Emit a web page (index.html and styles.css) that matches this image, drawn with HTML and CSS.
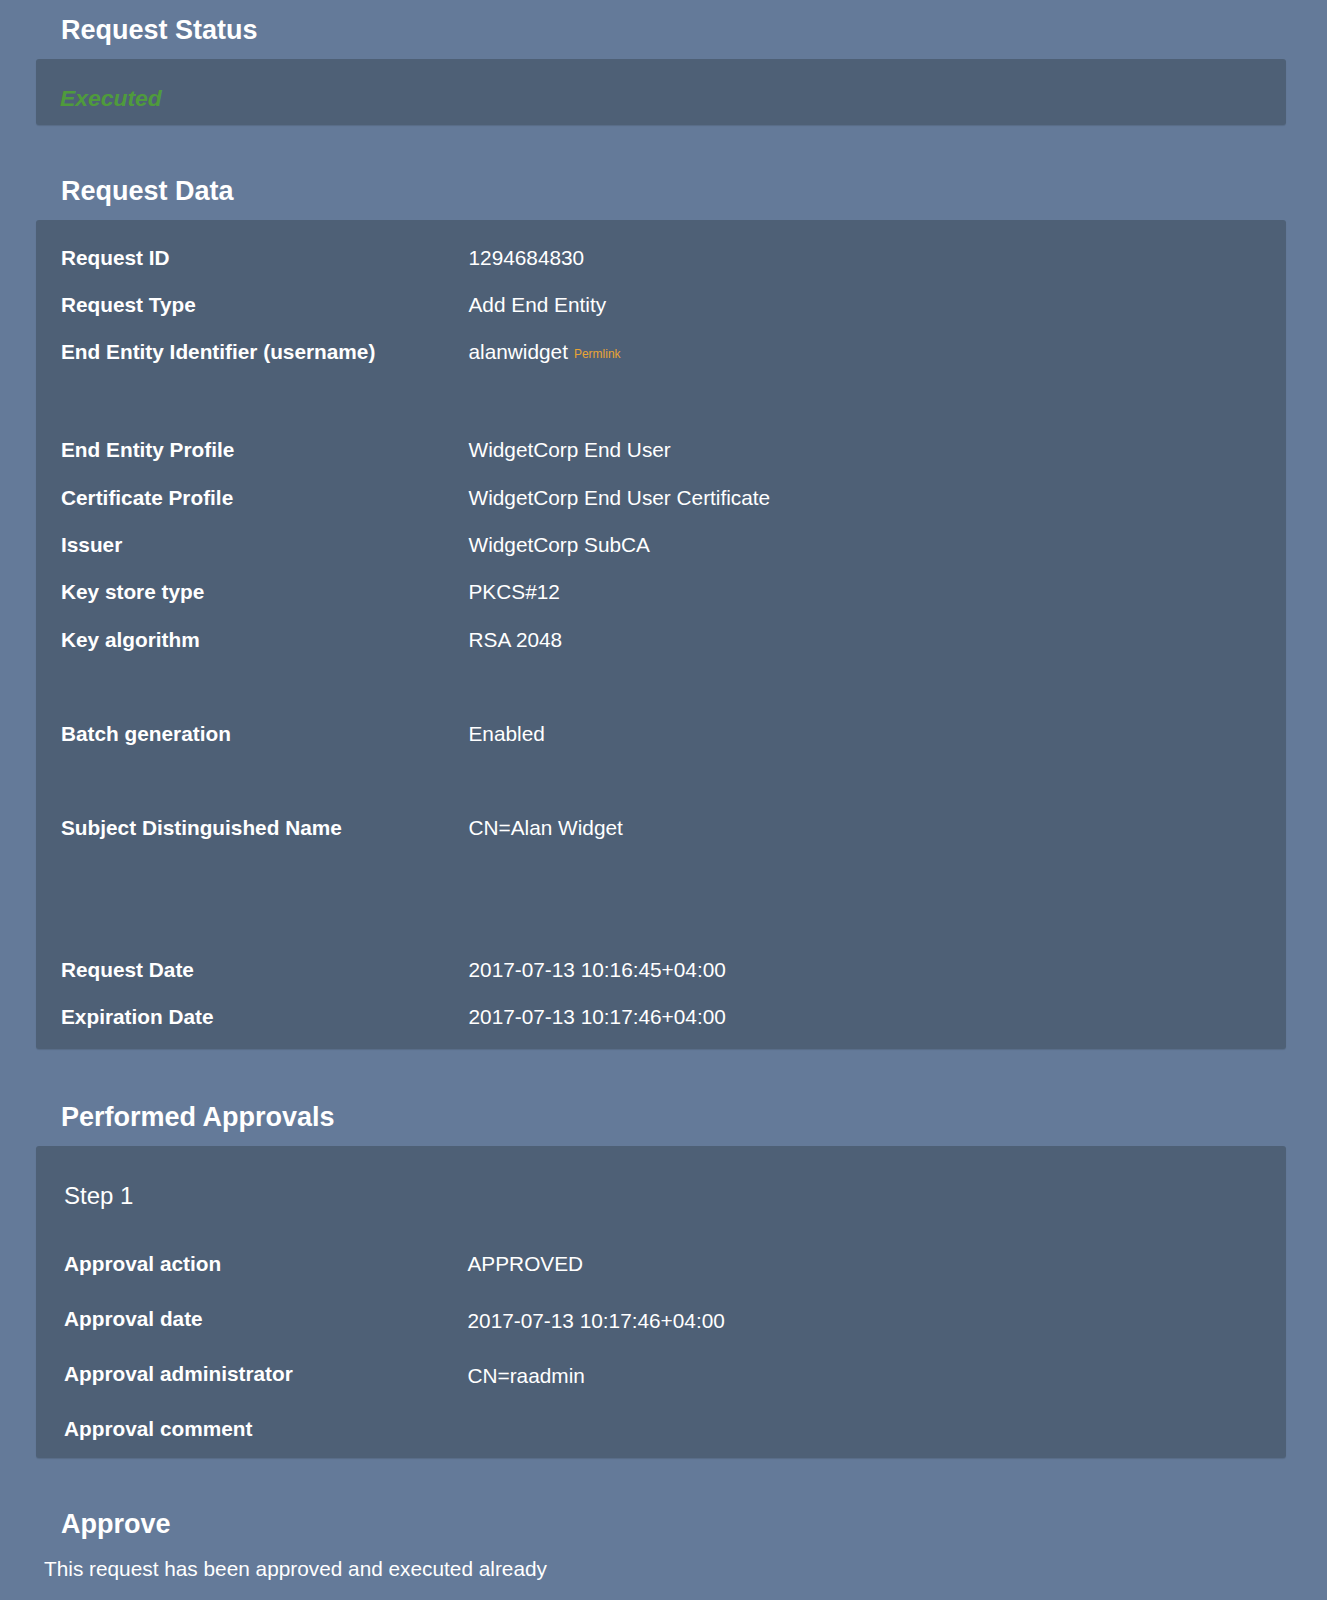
FILE: index.html
```html
<!DOCTYPE html>
<html lang="en">
<head>
<meta charset="utf-8">
<title>Request</title>
<link rel="stylesheet" href="styles.css">
</head>
<body>
<div class="container">
  <h2 class="section-title first">Request Status</h2>
  <div class="panel status-panel">
    <span class="status-executed">Executed</span>
  </div>

  <h2 class="section-title">Request Data</h2>
  <div class="panel data-panel">
    <div class="data-grid">
      <div class="label">Request ID</div><div class="value">1294684830</div>
      <div class="label">Request Type</div><div class="value">Add End Entity</div>
      <div class="label">End Entity Identifier (username)</div><div class="value">alanwidget <a class="permlink" href="#">Permlink</a></div>
      <div class="label spacer-tall"></div><div class="value spacer-tall"></div>
      <div class="label">End Entity Profile</div><div class="value">WidgetCorp End User</div>
      <div class="label">Certificate Profile</div><div class="value">WidgetCorp End User Certificate</div>
      <div class="label">Issuer</div><div class="value">WidgetCorp SubCA</div>
      <div class="label">Key store type</div><div class="value">PKCS#12</div>
      <div class="label">Key algorithm</div><div class="value">RSA 2048</div>
      <div class="label spacer-short"></div><div class="value spacer-short"></div>
      <div class="label">Batch generation</div><div class="value">Enabled</div>
      <div class="label"></div><div class="value"></div>
      <div class="label">Subject Distinguished Name</div><div class="value">CN=Alan Widget</div>
      <div class="label"></div><div class="value"></div>
      <div class="label"></div><div class="value"></div>
      <div class="label">Request Date</div><div class="value">2017-07-13 10:16:45+04:00</div>
      <div class="label">Expiration Date</div><div class="value">2017-07-13 10:17:46+04:00</div>
    </div>
  </div>

  <h2 class="section-title approvals-title">Performed Approvals</h2>
  <div class="panel approvals-panel">
    <div class="step-title">Step 1</div>
    <div class="approval-grid">
      <div class="label">Approval action</div><div class="value">APPROVED</div>
      <div class="label">Approval date</div><div class="value shifted">2017-07-13 10:17:46+04:00</div>
      <div class="label">Approval administrator</div><div class="value shifted">CN=raadmin</div>
      <div class="label">Approval comment</div><div class="value"></div>
    </div>
  </div>

  <h2 class="section-title">Approve</h2>
  <p class="note">This request has been approved and executed already</p>
</div>
</body>
</html>
```

FILE: styles.css
```css
html, body {
  margin: 0;
  padding: 0;
}

body {
  background: #647a99;
  color: #ffffff;
  font-family: "Liberation Sans", Arial, Helvetica, sans-serif;
  font-size: 20.8px;
  min-height: 1600px;
}

.container {
  width: 1250px;
  margin-left: 36px;
  padding-top: 13.5px;
}

.section-title {
  font-size: 27px;
  font-weight: bold;
  line-height: 32px;
  height: 32px;
  margin: 50px 0 13px 25px;
}

.section-title.first {
  margin-top: 0;
}

.section-title.approvals-title {
  margin-top: 52px;
}

.panel {
  background: #4e6076;
  border-radius: 3px;
  box-shadow: 0 1px 1px rgba(0, 0, 0, 0.12);
}

.status-panel {
  height: 66px;
  box-sizing: border-box;
  padding: 26px 0 0 24px;
}

.status-executed {
  display: block;
  color: #4f9b3c;
  font-style: italic;
  font-weight: bold;
  font-size: 22.9px;
  line-height: 26px;
}

.data-panel {
  padding: 14.75px 0 8.25px 25px;
}

.data-grid {
  display: grid;
  grid-template-columns: 407.5px 1fr;
  grid-auto-rows: auto;
  align-items: center;
}

.data-grid > div {
  height: 47.3px;
  display: flex;
  align-items: center;
}

.data-grid > .spacer-tall {
  height: 50.7px;
}

.data-grid > .spacer-short {
  height: 46.7px;
}

.label {
  font-weight: bold;
  line-height: 24px;
}

.value {
  line-height: 24px;
}

.permlink {
  color: #e9a435;
  font-size: 12px;
  text-decoration: none;
  margin-left: 6px;
  padding-top: 4px;
}

.approvals-panel {
  padding: 35px 0 1.5px 28px;
}

.step-title {
  font-size: 24px;
  line-height: 30px;
  margin-bottom: 25.5px;
}

.approval-grid {
  display: grid;
  grid-template-columns: 403.5px 1fr;
  grid-auto-rows: 55px;
  align-items: center;
}

.approval-grid .value.shifted {
  padding-top: 4px;
}

.note {
  margin: 0 0 0 8px;
  padding-top: 4px;
  line-height: 24px;
}
```
